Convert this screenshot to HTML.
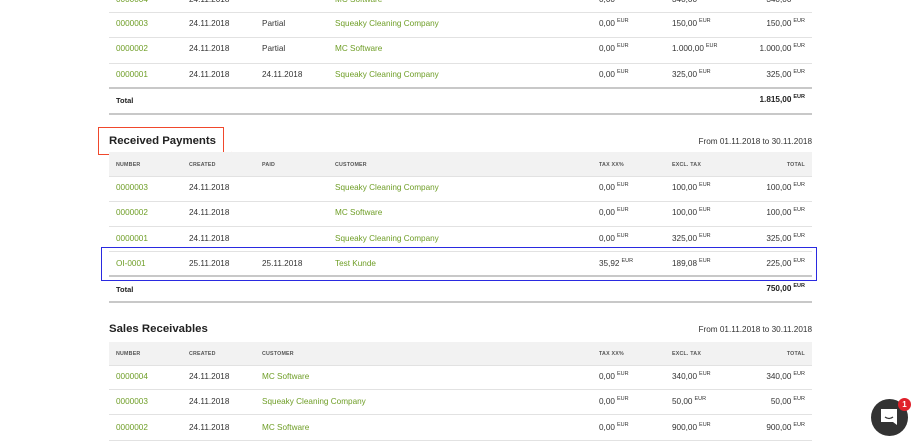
<!DOCTYPE html>
<html><head><meta charset="utf-8"><style>
body{margin:0;width:920px;height:448px;overflow:hidden;background:#fff;font-family:"Liberation Sans",sans-serif;font-size:8.2px;color:#333;position:relative}
.a{position:absolute;white-space:nowrap;line-height:12px}
.g{color:#6f9e27}
.l{position:absolute;left:109px;width:703px;height:1px;background:#e2e2e2}
.lt{position:absolute;left:109px;width:703px;height:2px;background:#c8c8c8}
.hb{position:absolute;left:109px;width:703px;height:24px;background:#f2f2f2}
.h{font-size:5.3px;font-weight:bold;color:#555;letter-spacing:.2px}
.r{text-align:right;width:200px}
.fr{text-align:right;width:300px;left:512px}
sup{font-size:5.5px;vertical-align:0;position:relative;top:-4px;margin-left:2px}
.t{font-size:11.4px;font-weight:bold;color:#222}
.b{font-weight:bold;color:#222}
</style></head><body>

<div class="a g" style="left:116px;top:-6px">0000004</div><div class="a" style="left:189px;top:-6px">24.11.2018</div><div class="a g" style="left:335px;top:-6px">MC Software</div><div class="a" style="left:599px;top:-6px">0,00<sup>EUR</sup></div><div class="a" style="left:672px;top:-6px">340,00<sup>EUR</sup></div><div class="a r" style="left:605px;top:-6px">340,00<sup>EUR</sup></div>
<div class="l" style="top:12px"></div>
<div class="a g" style="left:116px;top:18px">0000003</div><div class="a" style="left:189px;top:18px">24.11.2018</div><div class="a" style="left:262px;top:18px">Partial</div><div class="a g" style="left:335px;top:18px">Squeaky Cleaning Company</div><div class="a" style="left:599px;top:18px">0,00<sup>EUR</sup></div><div class="a" style="left:672px;top:18px">150,00<sup>EUR</sup></div><div class="a r" style="left:605px;top:18px">150,00<sup>EUR</sup></div>
<div class="l" style="top:37px"></div>
<div class="a g" style="left:116px;top:43px">0000002</div><div class="a" style="left:189px;top:43px">24.11.2018</div><div class="a" style="left:262px;top:43px">Partial</div><div class="a g" style="left:335px;top:43px">MC Software</div><div class="a" style="left:599px;top:43px">0,00<sup>EUR</sup></div><div class="a" style="left:672px;top:43px">1.000,00<sup>EUR</sup></div><div class="a r" style="left:605px;top:43px">1.000,00<sup>EUR</sup></div>
<div class="l" style="top:63px"></div>
<div class="a g" style="left:116px;top:69px">0000001</div><div class="a" style="left:189px;top:69px">24.11.2018</div><div class="a" style="left:262px;top:69px">24.11.2018</div><div class="a g" style="left:335px;top:69px">Squeaky Cleaning Company</div><div class="a" style="left:599px;top:69px">0,00<sup>EUR</sup></div><div class="a" style="left:672px;top:69px">325,00<sup>EUR</sup></div><div class="a r" style="left:605px;top:69px">325,00<sup>EUR</sup></div>
<div class="lt" style="top:87px"></div>
<div class="a b" style="left:116px;top:95px;font-size:7.5px">Total</div><div class="a r b" style="left:605px;top:94px">1.815,00<sup>EUR</sup></div>
<div class="lt" style="top:113px"></div>

<div class="a t" style="left:109px;top:135px">Received Payments</div>
<div style="position:absolute;left:98px;top:127px;width:124px;height:26px;border:1.5px solid #f0482c"></div>
<div class="a fr" style="top:136px">From 01.11.2018 to 30.11.2018</div>
<svg style="position:absolute;left:228px;top:150px" width="12" height="26"><line x1="3" y1="2" x2="7" y2="20" stroke="#f0482c" stroke-width="1.2"/><polygon points="4,18 10,18 8,24" fill="#f0482c"/></svg>
<div class="hb" style="top:152px"></div>
<div class="a h" style="left:116px;top:159px">NUMBER</div><div class="a h" style="left:189px;top:159px">CREATED</div><div class="a h" style="left:262px;top:159px">PAID</div><div class="a h" style="left:335px;top:159px">CUSTOMER</div><div class="a h" style="left:599px;top:159px">TAX XX%</div><div class="a h" style="left:672px;top:159px">EXCL. TAX</div><div class="a h r" style="left:605px;top:159px">TOTAL</div>
<div class="l" style="top:176px"></div>
<div class="a g" style="left:116px;top:182px">0000003</div><div class="a" style="left:189px;top:182px">24.11.2018</div><div class="a g" style="left:335px;top:182px">Squeaky Cleaning Company</div><div class="a" style="left:599px;top:182px">0,00<sup>EUR</sup></div><div class="a" style="left:672px;top:182px">100,00<sup>EUR</sup></div><div class="a r" style="left:605px;top:182px">100,00<sup>EUR</sup></div>
<div class="l" style="top:201px"></div>
<div class="a g" style="left:116px;top:207px">0000002</div><div class="a" style="left:189px;top:207px">24.11.2018</div><div class="a g" style="left:335px;top:207px">MC Software</div><div class="a" style="left:599px;top:207px">0,00<sup>EUR</sup></div><div class="a" style="left:672px;top:207px">100,00<sup>EUR</sup></div><div class="a r" style="left:605px;top:207px">100,00<sup>EUR</sup></div>
<div class="l" style="top:226px"></div>
<div class="a g" style="left:116px;top:233px">0000001</div><div class="a" style="left:189px;top:233px">24.11.2018</div><div class="a g" style="left:335px;top:233px">Squeaky Cleaning Company</div><div class="a" style="left:599px;top:233px">0,00<sup>EUR</sup></div><div class="a" style="left:672px;top:233px">325,00<sup>EUR</sup></div><div class="a r" style="left:605px;top:233px">325,00<sup>EUR</sup></div>
<div class="l" style="top:251px"></div>
<div class="a g" style="left:116px;top:258px">OI-0001</div><div class="a" style="left:189px;top:258px">25.11.2018</div><div class="a" style="left:262px;top:258px">25.11.2018</div><div class="a g" style="left:335px;top:258px">Test Kunde</div><div class="a" style="left:599px;top:258px">35,92<sup>EUR</sup></div><div class="a" style="left:672px;top:258px">189,08<sup>EUR</sup></div><div class="a r" style="left:605px;top:258px">225,00<sup>EUR</sup></div>
<div class="lt" style="top:275px"></div>
<div style="position:absolute;left:101px;top:247px;width:714px;height:32px;border:1.5px solid #2a2ae0"></div>
<div class="a b" style="left:116px;top:284px;font-size:7.5px">Total</div><div class="a r b" style="left:605px;top:283px">750,00<sup>EUR</sup></div>
<div class="lt" style="top:301px"></div>

<div class="a t" style="left:109px;top:323px">Sales Receivables</div>
<div class="a fr" style="top:324px">From 01.11.2018 to 30.11.2018</div>
<div class="hb" style="top:342px"></div>
<div class="a h" style="left:116px;top:348px">NUMBER</div><div class="a h" style="left:189px;top:348px">CREATED</div><div class="a h" style="left:262px;top:348px">CUSTOMER</div><div class="a h" style="left:599px;top:348px">TAX XX%</div><div class="a h" style="left:672px;top:348px">EXCL. TAX</div><div class="a h r" style="left:605px;top:348px">TOTAL</div>
<div class="l" style="top:365px"></div>
<div class="a g" style="left:116px;top:371px">0000004</div><div class="a" style="left:189px;top:371px">24.11.2018</div><div class="a g" style="left:262px;top:371px">MC Software</div><div class="a" style="left:599px;top:371px">0,00<sup>EUR</sup></div><div class="a" style="left:672px;top:371px">340,00<sup>EUR</sup></div><div class="a r" style="left:605px;top:371px">340,00<sup>EUR</sup></div>
<div class="l" style="top:389px"></div>
<div class="a g" style="left:116px;top:396px">0000003</div><div class="a" style="left:189px;top:396px">24.11.2018</div><div class="a g" style="left:262px;top:396px">Squeaky Cleaning Company</div><div class="a" style="left:599px;top:396px">0,00<sup>EUR</sup></div><div class="a" style="left:672px;top:396px">50,00<sup>EUR</sup></div><div class="a r" style="left:605px;top:396px">50,00<sup>EUR</sup></div>
<div class="l" style="top:414px"></div>
<div class="a g" style="left:116px;top:422px">0000002</div><div class="a" style="left:189px;top:422px">24.11.2018</div><div class="a g" style="left:262px;top:422px">MC Software</div><div class="a" style="left:599px;top:422px">0,00<sup>EUR</sup></div><div class="a" style="left:672px;top:422px">900,00<sup>EUR</sup></div><div class="a r" style="left:605px;top:422px">900,00<sup>EUR</sup></div>
<div class="l" style="top:440px"></div>

<div style="position:absolute;left:871px;top:399px;width:37px;height:37px;border-radius:50%;background:#333"></div>
<svg style="position:absolute;left:879px;top:407px" width="21" height="21"><path d="M2 2h16v16l-4-3H2z" fill="#fff"/><path d="M6 10q4 3 8 0" stroke="#333" stroke-width="1.3" fill="none"/></svg>
<div style="position:absolute;left:898px;top:398px;width:13px;height:13px;border-radius:50%;background:#e0202a;color:#fff;font-size:8px;font-weight:bold;text-align:center;line-height:13px">1</div>
</body></html>
